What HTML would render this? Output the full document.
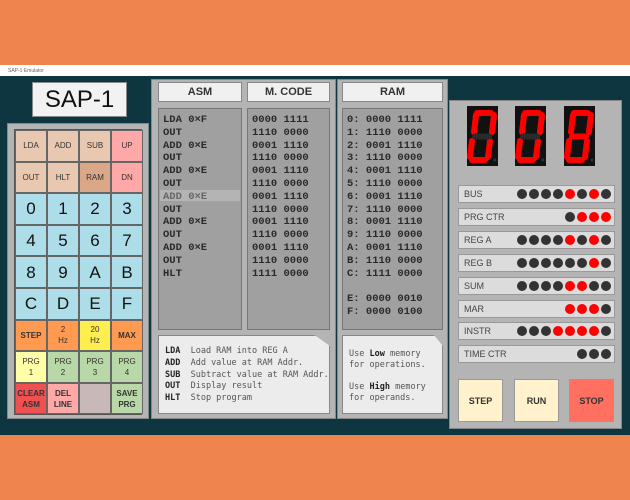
<!DOCTYPE html><html><head><style>
*{box-sizing:border-box;margin:0;padding:0}
body{width:630px;height:500px;background:#f0844f;position:relative;overflow:hidden;font-family:"Liberation Sans",sans-serif}
.a{position:absolute}
.win{left:0;top:65px;width:630px;height:370px;background:#0e3640}
.tb{left:0;top:65px;width:630px;height:11px;background:#fff;font-size:5px;color:#666;padding:3px 0 0 8px}
.panel{background:#b4b4b4;border:1px solid #888}
.hdr{background:#f0f0f0;border:1px solid #888;text-align:center;font-size:11px;font-weight:bold;color:#333;line-height:18px}
.list{background:#a0a0a0;border:1px solid #777;font-family:"Liberation Mono",monospace;font-weight:bold;font-size:10.5px;color:#2a2a2a;padding:5px 0 0 4px;line-height:12.8px;white-space:pre}
.grid{left:14px;top:129px;width:128px;display:grid;grid-template-columns:repeat(4,32px);grid-auto-rows:31.6px;border:1px solid #555}
.grid div{border:1px solid #666;display:flex;align-items:center;justify-content:center;text-align:center;font-size:8px;color:#333;line-height:11px}
.n{background:#acdde9;font-size:17px!important;color:#111!important}
.i{background:#e8c8b0}
.info{background:#ececec;border:1px solid #888;font-family:"DejaVu Sans Mono",monospace;font-size:8.5px;color:#555;clip-path:polygon(0 0,91% 0,100% 14%,100% 100%,0 100%)}
.row{left:458px;width:157px;height:18px;background:#dcdcdc;border:1px solid #999;font-size:9px;color:#444;padding:3px 0 0 5px}
.dots{position:absolute;right:3px;top:3px;display:flex;gap:2px}
.dots i{width:10px;height:10px;border-radius:50%;background:#333;display:block}
.dots i.r{background:#f00}
.btn{top:379px;width:45px;height:43px;border:1px solid #999;font-size:9px;font-weight:bold;color:#333;display:flex;align-items:center;justify-content:center}
</style></head><body>
<div class="a win"></div>
<div class="a tb">SAP-1 Emulator</div>
<div class="a" style="left:32px;top:82px;width:95px;height:35px;background:#f2f2f2;border:1px solid #888;font-size:24px;text-align:center;line-height:34px;color:#111">SAP-1</div>
<div class="a panel" style="left:7px;top:123px;width:142px;height:296px"></div>
<div class="a grid">
<div class="i">LDA</div><div class="i">ADD</div><div class="i">SUB</div><div style="background:#ffa8a8">UP</div>
<div class="i">OUT</div><div class="i">HLT</div><div style="background:#daa888">RAM</div><div style="background:#ffa8a8">DN</div>
<div class="n">0</div><div class="n">1</div><div class="n">2</div><div class="n">3</div>
<div class="n">4</div><div class="n">5</div><div class="n">6</div><div class="n">7</div>
<div class="n">8</div><div class="n">9</div><div class="n">A</div><div class="n">B</div>
<div class="n">C</div><div class="n">D</div><div class="n">E</div><div class="n">F</div>
<div style="background:#ff9a50;font-weight:bold">STEP</div><div style="background:#ff9a50">2<br>Hz</div><div style="background:#ffee50">20<br>Hz</div><div style="background:#ff9a50;font-weight:bold">MAX</div>
<div style="background:#ffffa8">PRG<br>1</div><div style="background:#b8d8a8">PRG<br>2</div><div style="background:#b8d8a8">PRG<br>3</div><div style="background:#b8d8a8">PRG<br>4</div>
<div style="background:#f05050;font-weight:bold">CLEAR<br>ASM</div><div style="background:#ffa8a8;font-weight:bold">DEL<br>LINE</div><div style="background:#c8b8b8"></div><div style="background:#b8d8a8;font-weight:bold">SAVE<br>PRG</div>
</div>
<div class="a panel" style="left:151px;top:79px;width:185px;height:340px"></div>
<div class="a panel" style="left:337px;top:79px;width:111px;height:340px"></div>
<div class="a hdr" style="left:158px;top:82px;width:84px;height:20px">ASM</div>
<div class="a hdr" style="left:247px;top:82px;width:83px;height:20px">M. CODE</div>
<div class="a hdr" style="left:342px;top:82px;width:101px;height:20px">RAM</div>
<div class="a list" style="left:158px;top:108px;width:84px;height:222px"></div>
<div class="a" style="left:160px;top:190px;width:80px;height:11px;background:#b4b4b4"></div>
<div class="a list" style="left:158px;top:108px;width:84px;height:222px;background:transparent">LDA 0×F
OUT
ADD 0×E
OUT
ADD 0×E
OUT
<span style="color:#666">ADD 0×E</span>
OUT
ADD 0×E
OUT
ADD 0×E
OUT
HLT</div>
<div class="a list" style="left:247px;top:108px;width:83px;height:222px">0000 1111
1110 0000
0001 1110
1110 0000
0001 1110
1110 0000
0001 1110
1110 0000
0001 1110
1110 0000
0001 1110
1110 0000
1111 0000</div>
<div class="a list" style="left:342px;top:108px;width:101px;height:222px">0: 0000 1111
1: 1110 0000
2: 0001 1110
3: 1110 0000
4: 0001 1110
5: 1110 0000
6: 0001 1110
7: 1110 0000
8: 0001 1110
9: 1110 0000
A: 0001 1110
B: 1110 0000
C: 1111 0000

E: 0000 0010
F: 0000 0100</div>
<div class="a info" style="left:158px;top:335px;width:172px;height:79px;padding:10px 0 0 6px;line-height:11.8px;white-space:pre"><b style="color:#222">LDA</b>  Load RAM into REG A
<b style="color:#222">ADD</b>  Add value at RAM Addr.
<b style="color:#222">SUB</b>  Subtract value at RAM Addr.
<b style="color:#222">OUT</b>  Display result
<b style="color:#222">HLT</b>  Stop program</div>
<div class="a info" style="left:342px;top:335px;width:101px;height:79px;padding:13px 0 0 6px;line-height:11px;white-space:pre">Use <b style="color:#222">Low</b> memory
for operations.

Use <b style="color:#222">High</b> memory
for operands.</div>
<div class="a panel" style="left:449px;top:100px;width:173px;height:329px"></div>
<svg class="a" style="left:467px;top:106px" width="129" height="61" viewBox="0 0 129 61">
<rect x="0" y="0" width="31" height="60" fill="#111"/><rect x="48" y="0" width="31" height="60" fill="#111"/><rect x="97" y="0" width="31" height="60" fill="#111"/>
<g stroke-linecap="round" stroke-width="6" fill="none">
<g stroke="#f00"><path d="M10 7H24M27 9L25 26M23 35L21 51M18 54H5M3 51L5 35M7 26L9 9"/><path stroke="#2a2a2a" d="M8 30.5H22"/></g>
<g stroke="#f00" transform="translate(48 0)"><path d="M10 7H24M27 9L25 26M23 35L21 51M18 54H5M3 51L5 35M7 26L9 9"/><path stroke="#2a2a2a" d="M8 30.5H22"/></g>
<g stroke="#f00" transform="translate(97 0)"><path d="M10 7H24M27 9L25 26M23 35L21 51M18 54H5M3 51L5 35M7 26L9 9M8 30.5H22"/></g>
</g>
<circle cx="28" cy="54" r="1.5" fill="#333"/><circle cx="76" cy="54" r="1.5" fill="#333"/><circle cx="125" cy="54" r="1.5" fill="#333"/>
</svg>
<div class="a row" style="top:185px">BUS<span class="dots"><i></i><i></i><i></i><i></i><i class="r"></i><i></i><i class="r"></i><i></i></span></div>
<div class="a row" style="top:208px">PRG CTR<span class="dots"><i></i><i class="r"></i><i class="r"></i><i class="r"></i></span></div>
<div class="a row" style="top:231px">REG A<span class="dots"><i></i><i></i><i></i><i></i><i class="r"></i><i></i><i class="r"></i><i></i></span></div>
<div class="a row" style="top:254px">REG B<span class="dots"><i></i><i></i><i></i><i></i><i></i><i></i><i class="r"></i><i></i></span></div>
<div class="a row" style="top:277px">SUM<span class="dots"><i></i><i></i><i></i><i></i><i class="r"></i><i class="r"></i><i></i><i></i></span></div>
<div class="a row" style="top:300px">MAR<span class="dots"><i class="r"></i><i class="r"></i><i class="r"></i><i></i></span></div>
<div class="a row" style="top:322px">INSTR<span class="dots"><i></i><i></i><i></i><i class="r"></i><i class="r"></i><i class="r"></i><i class="r"></i><i></i></span></div>
<div class="a row" style="top:345px">TIME CTR<span class="dots"><i></i><i></i><i></i></span></div>
<div class="a btn" style="left:458px;background:#fff2cc">STEP</div>
<div class="a btn" style="left:514px;background:#fff2cc">RUN</div>
<div class="a btn" style="left:569px;background:#ff7060">STOP</div>
</body></html>
